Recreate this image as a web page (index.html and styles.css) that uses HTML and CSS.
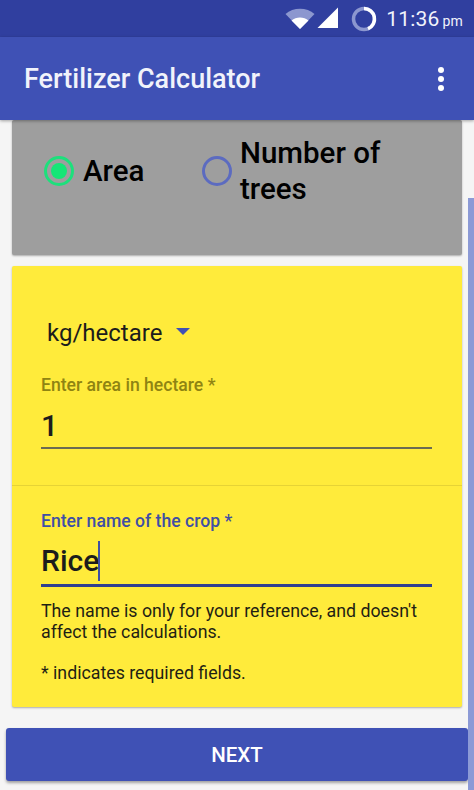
FILE: index.html
```html
<!DOCTYPE html>
<html lang="en">
<head>
  <meta charset="UTF-8" />
  <title>Fertilizer Calculator</title>
  <meta name="viewport" content="width=device-width, initial-scale=1.0" />
  <link rel="stylesheet" href="styles.css">
</head>
<body>

  <div class="status-bar">
    <svg class="icon-wifi" width="30" height="22" viewBox="0 0 30 22">
      <path d="M0.5 6 C8 -1 22 -1 29.5 6 L15 21 Z" fill="#8c97cf" />
      <path d="M6.5 12.5 C11 8.5 19 8.5 23.5 12.5 L15 21 Z" fill="#fff" />
    </svg>
    <svg class="icon-signal" width="22" height="22" viewBox="0 0 22 22">
      <path d="M21 0.5 V21 H0.5 Z" fill="#fff" />
    </svg>
    <svg class="icon-battery" width="26" height="26" viewBox="0 0 26 26">
      <circle cx="13" cy="13" r="10.5" fill="none" stroke="#8c97cf" stroke-width="3.5" />
      <path d="M13 2.5 A10.5 10.5 0 0 1 17 22.7" fill="none" stroke="#fff" stroke-width="3.5" />
    </svg>
    <span class="clock">11:36<span class="clock-ampm">pm</span></span>
  </div>

  <header class="app-bar">
    <h1>Fertilizer Calculator</h1>
    <div class="overflow-menu"><i></i><i></i><i></i></div>
  </header>

  <main class="content">
    <section class="card card-gray">
      <label class="radio radio-area">
        <span class="radio-mark checked"></span>
        <span>Area</span>
      </label>
      <label class="radio radio-trees">
        <span class="radio-mark"></span>
        <span>Number of<br>trees</span>
      </label>
    </section>

    <section class="card card-yellow">
      <div class="part part-top">
        <div class="spinner">kg/hectare <span class="spinner-arrow"></span></div>
        <div class="field">
          <div class="field-label">Enter area in hectare *</div>
          <div class="field-value">1</div>
        </div>
      </div>
      <div class="part part-bottom">
        <div class="field field-active">
          <div class="field-label">Enter name of the crop *</div>
          <div class="field-value">Rice<span class="cursor"></span></div>
        </div>
        <p class="note">The name is only for your reference, and doesn't affect the calculations.</p>
        <p class="note">* indicates required fields.</p>
      </div>
    </section>

    <button class="btn-next">NEXT</button>
  </main>

  <div class="scrollbar"></div>

</body>
</html>
```

FILE: styles.css
```css
html, body {
  height: 100%;
}

body {
  margin: 0;
  height: 790px;
  overflow: hidden;
  position: relative;
  display: flex;
  flex-direction: column;
  font-family: Roboto, sans-serif;
  background: #f5f5f5;
  color: #1c1c1c;
}

.status-bar {
  height: 37px;
  flex: none;
  display: flex;
  align-items: center;
  justify-content: flex-end;
  padding-right: 11px;
  background: #303f9f;
  color: #f1f3fb;
}

.icon-wifi {
  margin-right: 2px;
}

.icon-signal {
  margin-right: 12px;
  margin-top: -1px;
}

.icon-battery {
  margin-right: 9px;
}

.clock {
  font-size: 21px;
  letter-spacing: 0.2px;
}

.clock-ampm {
  font-size: 14px;
  margin-left: 3px;
}

.app-bar {
  height: 83px;
  flex: none;
  position: relative;
  z-index: 2;
  display: flex;
  align-items: center;
  justify-content: space-between;
  padding: 0 30px 0 24px;
  background: #3f51b5;
  box-shadow: 0 1px 3px rgba(0, 0, 0, 0.35);
}

h1 {
  margin: 0;
  font-size: 27px;
  font-weight: 500;
  color: #f1f3fb;
}

.overflow-menu {
  display: flex;
  flex-direction: column;
  gap: 3px;
}

.overflow-menu i {
  display: block;
  width: 6px;
  height: 6px;
  border-radius: 50%;
  background: #fff;
}

.content {
  flex: 1;
  display: flex;
  flex-direction: column;
}

.card {
  margin: 0 12px;
  border-radius: 2px;
  box-shadow: 0 1px 2px rgba(0, 0, 0, 0.3);
}

.card-gray {
  height: 135px;
  box-sizing: border-box;
  display: flex;
  align-items: flex-start;
  padding: 15px 0 0 32px;
  background: #9e9e9e;
  color: #000;
  font-size: 29.5px;
  font-weight: 500;
  line-height: 36px;
}

.radio {
  display: flex;
  align-items: center;
}

.radio-area {
  width: 158px;
  height: 72px;
}

.radio-mark {
  width: 30px;
  height: 30px;
  box-sizing: border-box;
  border: 3px solid #5c6bc0;
  border-radius: 50%;
  margin-right: 8px;
  flex: none;
}

.radio-mark.checked {
  border-color: #1de07c;
  margin-right: 9px;
  position: relative;
}

.radio-mark.checked::after {
  content: "";
  position: absolute;
  inset: 4px;
  border-radius: 50%;
  background: #14e676;
}

.card-yellow {
  margin-top: 11px;
  height: 441px;
  background: #ffeb3b;
}

.part-top {
  height: 220px;
  box-sizing: border-box;
  padding: 51px 30px 0 29px;
  border-bottom: 1px solid #e6d335;
}

.spinner {
  font-size: 24px;
  line-height: 32px;
  padding-left: 6px;
  display: flex;
  align-items: center;
  height: 32px;
}

.spinner-arrow {
  width: 0;
  height: 0;
  margin-left: 14px;
  margin-top: -3px;
  border-left: 7px solid transparent;
  border-right: 7px solid transparent;
  border-top: 7px solid #3f51b5;
}

.field-label {
  font-size: 17.6px;
  font-weight: 500;
  line-height: 22px;
  color: #8f8412;
}

.part-top .field {
  margin-top: 25px;
}

.field-value {
  height: 45px;
  box-sizing: border-box;
  font-size: 30px;
  font-weight: 500;
  line-height: 44px;
  border-bottom: 2px solid #6b6b52;
  position: relative;
}

.part-top .field-value {
  margin-top: 8px;
}

.part-bottom {
  padding: 24px 30px 0 29px;
}

.field-active .field-label {
  color: #3f4fa5;
}

.field-active .field-value {
  margin-top: 7px;
  height: 48px;
  border-bottom: 3px solid #303f8f;
}

.cursor {
  display: inline-block;
  width: 2px;
  height: 40px;
  margin-left: -1px;
  vertical-align: -10px;
  background: #3f4fa5;
}

.note {
  margin: 0 0 20px;
  font-size: 17.75px;
  line-height: 21px;
  color: #1f1f14;
}

.part-bottom .field {
  margin-bottom: 14px;
}

.btn-next {
  display: block;
  margin: 21px 6px 0;
  height: 53px;
  flex: none;
  border: 0;
  border-radius: 3px;
  background: #3f51b5;
  color: #fff;
  font-family: Roboto, sans-serif;
  font-size: 20.5px;
  font-weight: 500;
  box-shadow: 0 2px 3px rgba(0, 0, 0, 0.35);
}

.scrollbar {
  position: absolute;
  top: 198px;
  right: 0;
  bottom: 0;
  width: 6px;
  background: #8c9ad6;
}
```
